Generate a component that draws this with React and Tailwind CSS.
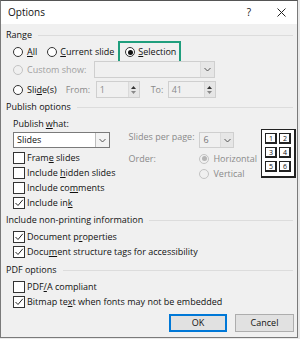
import React from "react";

const font = { fontFamily: '"Open Sans", "Noto Sans", sans-serif' };

function Radio({ checked = false, disabled = false }) {
  return (
    <span
      className={`relative flex h-[10px] w-[10px] shrink-0 items-center justify-center rounded-full border ${
        disabled ? "border-[#c3c3c3] bg-[#f0f0f0]" : "border-[#333] bg-white"
      }`}
    >
      {checked && (
        <span
          className={`h-[5px] w-[5px] rounded-full ${
            disabled ? "bg-[#b5b5b5]" : "bg-[#111]"
          }`}
        />
      )}
    </span>
  );
}

function Check({ checked = false }) {
  return (
    <span className="flex h-[12px] w-[12px] shrink-0 items-center justify-center border border-[#333] bg-white">
      {checked && (
        <svg width="10" height="10" viewBox="0 0 10 10">
          <polyline
            points="1.5,5 4,7.5 8.8,1.8"
            fill="none"
            stroke="#222"
            strokeWidth="1"
          />
        </svg>
      )}
    </span>
  );
}

function Group({ title, mt }) {
  return (
    <div className={`flex h-[14px] items-center pl-[5px] pr-[4px] ${mt}`}>
      <span className="text-[#111]">{title}</span>
      <span className="ml-[6px] h-px flex-1 bg-[#dcdcdc]" />
    </div>
  );
}

function CheckRow({ checked, children }) {
  return (
    <div className="flex h-[15px] items-center pl-[12px]">
      <Check checked={checked} />
      <span className="ml-[2px]">{children}</span>
    </div>
  );
}

function Caret() {
  return (
    <svg width="7" height="5" viewBox="0 0 7 5">
      <polyline points="0.5,1 3.5,4 6.5,1" fill="none" stroke="#555" strokeWidth="1" />
    </svg>
  );
}

function Spin({ value, width }) {
  return (
    <div
      className={`flex h-[17px] ${width} items-stretch border border-[#cfcfcf] bg-[#f0f0f0]`}
    >
      <span className="flex-1 pl-[3px] leading-[15px] text-[#8a8a8a]">{value}</span>
      <span className="flex w-[11px] flex-col items-center justify-center gap-[2px] border-l border-[#dadada] bg-[#e6e6e6]">
        <svg width="5" height="3" viewBox="0 0 5 3">
          <polygon points="0,3 2.5,0 5,3" fill="#333" />
        </svg>
        <svg width="5" height="3" viewBox="0 0 5 3">
          <polygon points="0,0 2.5,3 5,0" fill="#888" />
        </svg>
      </span>
    </div>
  );
}

function Thumb() {
  const cells = [1, 2, 3, 4, 5, 6];
  return (
    <div className="mt-[-3px] ml-auto mr-[1px] h-[49px] w-[35px] border border-r-2 border-b-2 border-[#222] bg-white p-[3px]">
      <div className="grid grid-cols-2 gap-x-[2px] gap-y-[3px]">
        {cells.map((n) => (
          <span
            key={n}
            className="flex h-[11px] items-center justify-end pr-[2px] border border-r-2 border-b-2 border-[#222] text-[7px] leading-none"
          >
            {n}
          </span>
        ))}
      </div>
    </div>
  );
}

export default function App() {
  return (
    <div className="h-[339px] w-[300px] bg-[#e9e9e9] text-[9px] text-[#111]" style={font}>
      <div className="flex h-[338px] w-[298px] flex-col border border-t-[#555] border-[#7a7a7a] bg-[#f0f0f0]">
        {/* TITLE */}
        <div className="flex h-[23px] items-center bg-white pl-[7px]">
          <span className="text-[10px]">Options</span>
          <span className="ml-auto mr-[26px] text-[10px]">?</span>
          <svg className="mr-[11px]" width="9" height="9" viewBox="0 0 9 9">
            <path d="M0.5 0.5 L8.5 8.5 M8.5 0.5 L0.5 8.5" stroke="#222" strokeWidth="1" />
          </svg>
        </div>

        {/* RANGE */}
        <Group title="Range" mt="mt-[4px]" />
        <div className="mt-[-1px] mb-[-2px] flex h-[22px] items-center pl-[12px]">
          <Radio />
          <span className="ml-[4px]">
            <u>A</u>ll
          </span>
          <span className="ml-[10px]">
            <Radio />
          </span>
          <span className="ml-[3px]">
            <u>C</u>urrent slide
          </span>
          <div className="ml-[4px] flex h-[22px] w-[63px] items-center border-2 border-[#1f9e7d] pl-[5px]">
            <Radio checked />
            <span className="ml-[3px]">
              <u>S</u>election
            </span>
          </div>
        </div>
        <div className="flex h-[17px] items-center pl-[12px]">
          <Radio disabled />
          <span className="ml-[4px] text-[#a0a0a0]">Custom show:</span>
          <div className="ml-auto mr-[82px] flex h-[17px] w-[121px] items-center justify-end border border-[#cfcfcf] bg-[#f0f0f0]">
            <span className="flex h-full w-[14px] items-center justify-center border-l border-[#dadada] bg-[#e6e6e6]">
              <Caret />
            </span>
          </div>
        </div>
        <div className="mt-[3px] flex h-[17px] items-center pl-[12px]">
          <Radio />
          <span className="ml-[4px]">
            Sli<u>d</u>e(s)
          </span>
          <span className="ml-[9px] w-[30px] text-[#8a8a8a]">From:</span>
          <Spin value="1" width="w-[44px]" />
          <span className="ml-[11px] w-[17px] text-[#8a8a8a]">To:</span>
          <Spin value="41" width="w-[48px]" />
        </div>

        {/* PUBLISH */}
        <Group title="Publish options" mt="mt-[2px]" />
        <div className="mt-[3px] flex">
          <div className="flex flex-col">
            <div className="flex h-[14px] items-center pl-[12px]">
              Publish <u className="ml-[2px]">w</u>hat:
            </div>
            <div className="mt-[1px] ml-[12px] flex h-[16px] w-[97px] items-center border border-[#7a7a7a] bg-white">
              <span className="flex-1 pl-[3px]">Slides</span>
              <span className="flex h-full w-[14px] items-center justify-center border-l border-[#bdbdbd] bg-[#f3f3f3]">
                <Caret />
              </span>
            </div>
            <div className="mt-[2px]">
              <CheckRow>
                Fram<u>e</u> slides
              </CheckRow>
              <CheckRow>
                Include <u>h</u>idden slides
              </CheckRow>
              <CheckRow>
                Include co<u>m</u>ments
              </CheckRow>
              <CheckRow checked>
                Include in<u>k</u>
              </CheckRow>
            </div>
          </div>

          <div className="ml-[13px] mt-[15px] flex flex-col text-[#8a8a8a]">
            <div className="flex h-[16px] items-start">
              <span className="mt-[-2px] w-[71px]">Slides per page:</span>
              <div className="flex h-[16px] w-[35px] items-center border border-[#cfcfcf] bg-[#f0f0f0]">
                <span className="flex-1 pl-[3px] text-[#777]">6</span>
                <span className="flex h-full w-[13px] items-center justify-center border-l border-[#dadada] bg-[#e6e6e6]">
                  <Caret />
                </span>
              </div>
            </div>
            <div className="mt-[3px] flex h-[15px] items-center">
              <span className="w-[71px]">Order:</span>
              <Radio checked disabled />
              <span className="ml-[4px]">Horizontal</span>
            </div>
            <div className="flex h-[15px] items-center pl-[71px]">
              <Radio disabled />
              <span className="ml-[4px]">Vertical</span>
            </div>
          </div>

          <div className="flex flex-1 pt-[15px]">
            <Thumb />
          </div>
        </div>

        {/* NON-PRINTING */}
        <Group title="Include non-printing information" mt="mt-[3px]" />
        <div className="mt-[2px]">
          <CheckRow checked>
            Document p<u>r</u>operties
          </CheckRow>
          <CheckRow checked>
            Docu<u>m</u>ent structure tags for accessibility
          </CheckRow>
        </div>

        {/* PDF */}
        <Group title="PDF options" mt="mt-[4px]" />
        <div className="mt-[2px]">
          <CheckRow>
            PDF<u>/</u>A compliant
          </CheckRow>
          <CheckRow checked>
            Bitmap te<u>x</u>t when fonts may not be embedded
          </CheckRow>
        </div>

        {/* BUTTONS */}
        <div className="mt-[5px] flex justify-end gap-[8px] pr-[3px]">
          <button className="h-[18px] w-[58px] border-2 border-[#0078d7] bg-[#e1e1e1] text-[9px]">
            OK
          </button>
          <button className="h-[18px] w-[59px] border border-[#adadad] bg-[#e1e1e1] text-[9px]">
            Cancel
          </button>
        </div>
      </div>
    </div>
  );
}
